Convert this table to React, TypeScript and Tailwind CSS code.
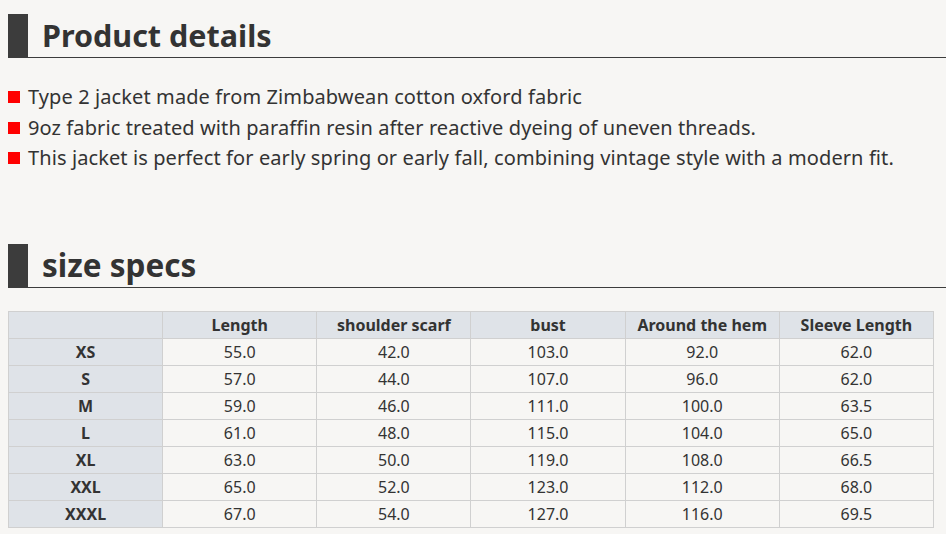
import React from "react";

const rows = [
  ["XS", "55.0", "42.0", "103.0", "92.0", "62.0"],
  ["S", "57.0", "44.0", "107.0", "96.0", "62.0"],
  ["M", "59.0", "46.0", "111.0", "100.0", "63.5"],
  ["L", "61.0", "48.0", "115.0", "104.0", "65.0"],
  ["XL", "63.0", "50.0", "119.0", "108.0", "66.5"],
  ["XXL", "65.0", "52.0", "123.0", "112.0", "68.0"],
  ["XXXL", "67.0", "54.0", "127.0", "116.0", "69.5"],
];

const headers = ["", "Length", "shoulder scarf", "bust", "Around the hem", "Sleeve Length"];

function Heading({ children, size }: { children: React.ReactNode; size: string }) {
  return (
    <div className="flex items-stretch">
      <div className="w-[20px] h-[44px] bg-[#3c3c3c]" />
      <div className="flex-1 border-b border-[#3c3c3c] pl-[14px] flex items-center">
        <span className={`${size} font-bold leading-none text-[#333]`}>{children}</span>
      </div>
    </div>
  );
}

export default function App() {
  return (
    <div
      className="w-[946px] h-[534px] bg-[#f7f6f4] overflow-hidden text-[#333]"
      style={{ fontFamily: '"Noto Sans", "Open Sans", sans-serif' }}
    >
      <div className="pl-[8px] pt-[14px]">
        <Heading size="text-[30.5px]">Product details</Heading>
        <ul className="mt-[24px] flex flex-col">
          {[
            "Type 2 jacket made from Zimbabwean cotton oxford fabric",
            "9oz fabric treated with paraffin resin after reactive dyeing of uneven threads.",
            "This jacket is perfect for early spring or early fall, combining vintage style with a modern fit.",
          ].map((t) => (
            <li key={t} className="flex items-center h-[30.5px]">
              <span className="w-[12px] h-[12px] bg-[#ff0000] mr-[8px] shrink-0" />
              <span className="text-[20px] leading-none tracking-[0.1px]">{t}</span>
            </li>
          ))}
        </ul>
        <div className="mt-[70px]">
          <Heading size="text-[31.5px]">size specs</Heading>
        </div>
        <table className="mt-[23px] border-collapse w-[926px] table-fixed text-[16px]">
          <thead>
            <tr className="h-[27px]">
              {headers.map((h, i) => (
                <th
                  key={i}
                  className="border border-[#d0d0d0] bg-[#dfe3e8] font-bold text-center p-0 leading-none"
                >
                  {h}
                </th>
              ))}
            </tr>
          </thead>
          <tbody>
            {rows.map((r) => (
              <tr key={r[0]} className="h-[27px]">
                {r.map((c, i) =>
                  i === 0 ? (
                    <th
                      key={i}
                      className="border border-[#d0d0d0] bg-[#dfe3e8] font-bold text-center p-0 leading-none"
                    >
                      {c}
                    </th>
                  ) : (
                    <td key={i} className="border border-[#d0d0d0] text-center p-0 leading-none">
                      {c}
                    </td>
                  )
                )}
              </tr>
            ))}
          </tbody>
        </table>
      </div>
    </div>
  );
}
